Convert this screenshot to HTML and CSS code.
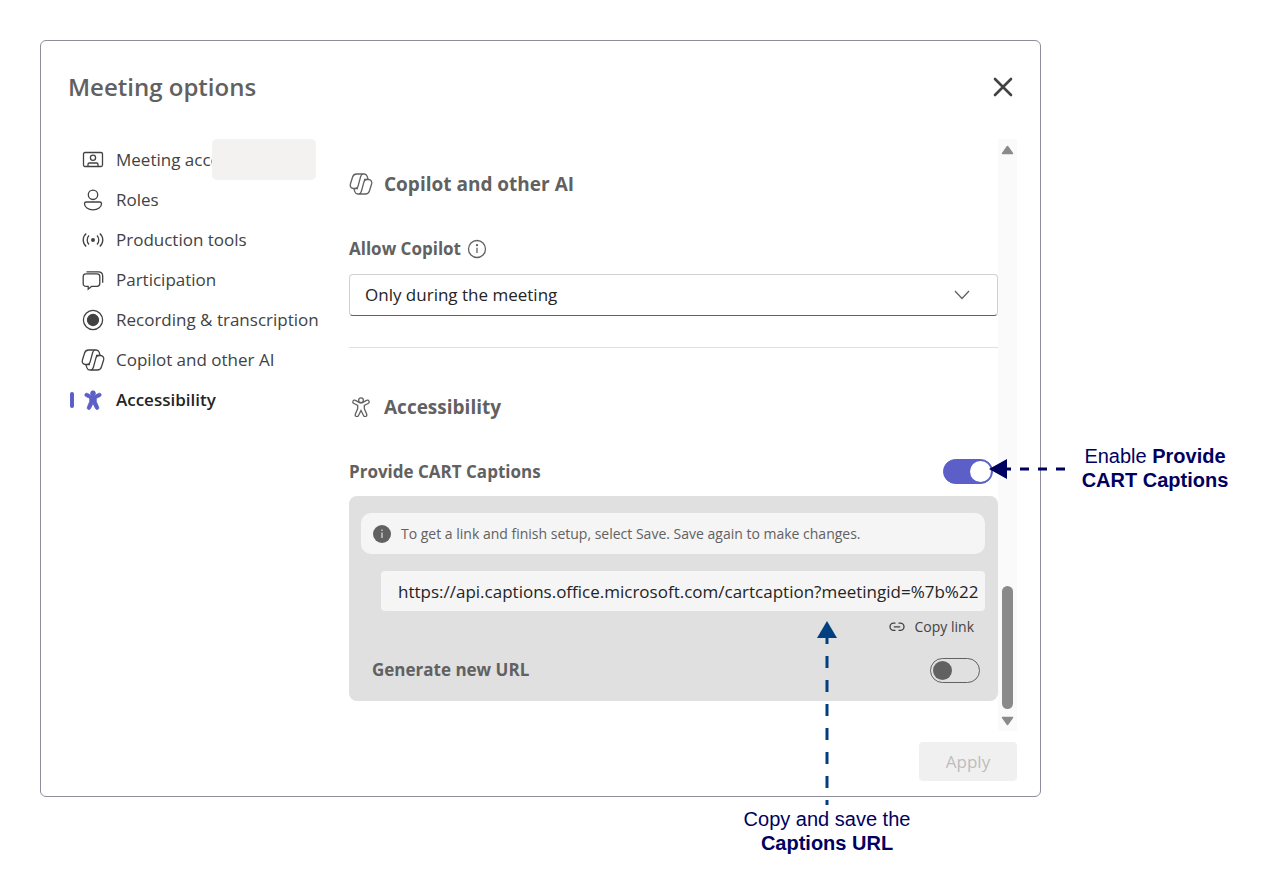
FILE: index.html
```html
<!DOCTYPE html>
<html lang="en">
<head>
    <meta charset="UTF-8">
    <meta name="viewport" content="width=device-width, initial-scale=1.0">
    <title>Meeting options</title>
    <link rel="stylesheet" href="styles.css">
</head>
<body>
    <!-- shared icon shapes -->
    <svg class="icon-defs" aria-hidden="true">
        <symbol id="icon-copilot" viewBox="0 0 24 22">
            <g id="copilot-half">
                <path d="M9 15.5H4.6C2 15.5.7 13.6 1.4 11L3.6 4C4.2 2 5.6 1 7.6 1h7.6c1.7 0 2.5.9 3 2.4l.9 3.1"/>
                <path d="M13.8 1c-1.3.4-1.8 1.4-2.2 2.8L9.2 12.7C8.7 14.5 8.1 15.5 6.4 15.5"/>
            </g>
            <use href="#copilot-half" transform="rotate(180 12 11)"/>
        </symbol>
        <symbol id="icon-person" viewBox="0 0 18 20">
            <circle cx="9" cy="3.2" r="2.4"/>
            <path d="M1 4.2c.4-1 1.5-1.3 2.5-.8L7 5.3c1.3.6 2.7.6 4 0l3.5-1.9c1-.5 2.1-.2 2.5.8.4.9 0 1.9-.9 2.3l-3.8 1.8v3.2l2.4 5.8c.3 1-.1 1.9-1 2.2-.9.3-1.8-.1-2.2-1L9 13.4l-2.500 5.100c-.4.9-1.3 1.3-2.2 1-.9-.3-1.3-1.2-1-2.2l2.400-5.800V8.300L1.900 6.500c-.9-.4-1.3-1.4-.9-2.3z"/>
        </symbol>
    </svg>

    <div class="page">
        <section class="dialog" aria-labelledby="dialog-title">
            <header class="dialog-header">
                <h1 id="dialog-title">Meeting options</h1>
                <button class="close-btn" type="button" aria-label="Close">
                    <svg width="20" height="20" viewBox="0 0 20 20"><path d="M2 2l16 16M18 2L2 18"/></svg>
                </button>
            </header>

            <div class="dialog-body">
                <nav class="side-nav">
                    <a href="#access" class="nav-item">
                        <svg class="icon" width="22" height="22" viewBox="0 0 22 22"><rect x="1.5" y="3.5" width="19" height="14" rx="1.5"/><circle cx="11" cy="8.7" r="2.6"/><path d="M6 17.5v-2.2c0-.8.5-1.3 1.3-1.3h7.4c.8 0 1.3.5 1.3 1.3v2.2"/></svg>
                        <span>Meeting access</span>
                        <span class="redaction"></span>
                    </a>
                    <a href="#roles" class="nav-item">
                        <svg class="icon" width="22" height="22" viewBox="0 0 22 22"><circle cx="11" cy="5.8" r="4.7"/><path d="M4.2 13h13.6c1 0 1.7.7 1.7 1.7 0 3.4-3.6 6.1-8.5 6.1s-8.5-2.7-8.5-6.1c0-1 .7-1.7 1.7-1.7z"/></svg>
                        <span>Roles</span>
                    </a>
                    <a href="#production" class="nav-item">
                        <svg class="icon" width="22" height="22" viewBox="0 0 22 22"><circle class="solid" cx="11" cy="11" r="1.3"/><path d="M4.2 4.5c-4 3.6-4 9.4 0 13M7 6.5c-2.400 2.500-2.400 6.500 0 9M17.8 4.5c4 3.6 4 9.4 0 13M15 6.5c2.400 2.500 2.400 6.500 0 9"/></svg>
                        <span>Production tools</span>
                    </a>
                    <a href="#participation" class="nav-item">
                        <svg class="icon" width="22" height="22" viewBox="0 0 22 22"><path d="M4 4.8h11c1.7 0 2.8 1.1 2.8 2.8v7c0 1.7-1.1 2.8-2.8 2.8H9.500l-3.300 2.800v-2.800H4c-1.7 0-2.8-1.1-2.8-2.8v-7c0-1.7 1.1-2.8 2.8-2.8z"/><path d="M4.5 2.8h11.8c2.6 0 4.4 1.8 4.4 4.4v6.6"/></svg>
                        <span>Participation</span>
                    </a>
                    <a href="#recording" class="nav-item">
                        <svg class="icon" width="22" height="22" viewBox="0 0 22 22"><circle cx="11" cy="11" r="9.6"/><circle class="solid" cx="11" cy="11" r="5.5"/></svg>
                        <span>Recording &amp; transcription</span>
                    </a>
                    <a href="#copilot" class="nav-item">
                        <svg class="icon icon-wide" width="24" height="22"><use href="#icon-copilot"/></svg>
                        <span>Copilot and other AI</span>
                    </a>
                    <a href="#accessibility" class="nav-item is-active" aria-current="true">
                        <svg class="icon" width="22" height="20"><use href="#icon-person"/></svg>
                        <span>Accessibility</span>
                    </a>
                </nav>

                <main class="settings">
                    <h2 id="copilot">
                        <svg class="icon" width="24" height="22"><use href="#icon-copilot"/></svg>
                        Copilot and other AI
                    </h2>
                    <div class="field-label">
                        <label for="allow-copilot">Allow Copilot</label>
                        <svg class="icon" width="20" height="20" viewBox="0 0 20 20"><circle cx="10" cy="10" r="8.5"/><path d="M10 8.8V14"/><circle class="solid" cx="10" cy="6.2" r=".5"/></svg>
                    </div>
                    <div class="select-wrap">
                        <select id="allow-copilot">
                            <option>Only during the meeting</option>
                            <option>During and after the meeting</option>
                        </select>
                        <svg class="chevron" width="16" height="10" viewBox="0 0 16 10"><path d="M1 1l7 7.5L15 1"/></svg>
                    </div>
                    <hr>

                    <h2 id="accessibility">
                        <svg class="icon" width="24" height="20"><use href="#icon-person"/></svg>
                        Accessibility
                    </h2>
                    <div class="setting-row">
                        <label for="cart">Provide CART Captions</label>
                        <div class="toggle-wrap">
                            <input class="toggle" type="checkbox" role="switch" id="cart" checked>
                            <svg class="arrow-left" width="78" height="20" viewBox="0 0 78 20"><path d="M0 10L18 0v20z"/><path class="dashes" d="M18 10h59" stroke-dasharray="9" stroke-dashoffset="5"/></svg>
                        </div>
                    </div>

                    <div class="cart-panel">
                        <p class="notice">
                            <svg width="18" height="18" viewBox="0 0 18 18"><circle cx="9" cy="9" r="9"/><path d="M9 7.5V13M9 4.5V6"/></svg>
                            To get a link and finish setup, select Save. Save again to make changes.
                        </p>
                        <div class="url-field">
                            <input type="text" aria-label="Captions URL" value="https://api.captions.office.microsoft.com/cartcaption?meetingid=%7b%22" readonly>
                            <svg class="arrow-up" width="20" height="184" viewBox="0 0 20 184"><path d="M10 0l10 17H0z"/><path class="dashes" d="M10 17v167" stroke-dasharray="12" stroke-dashoffset="6"/></svg>
                        </div>
                        <button class="copy-btn" type="button">
                            <svg width="16" height="10" viewBox="0 0 16 10"><path d="M6.5 1.2H4.6a3.6 3.6 0 0 0 0 7.2h1.9M9.5 1.2h1.9a3.6 3.6 0 0 1 0 7.2H9.5M4.8 4.8h6.4"/></svg>
                            Copy link
                        </button>
                        <div class="setting-row">
                            <label for="new-url">Generate new URL</label>
                            <input class="toggle" type="checkbox" role="switch" id="new-url">
                        </div>
                    </div>
                </main>

                <div class="scrollbar" aria-hidden="true">
                    <svg width="13" height="10" viewBox="0 0 13 10"><path d="M6.5 1.5l5 7h-10z"/></svg>
                    <div class="thumb"></div>
                    <svg width="13" height="10" viewBox="0 0 13 10"><path d="M6.5 8.500l-5-7h10z"/></svg>
                </div>
            </div>

            <footer class="dialog-footer">
                <button class="apply-btn" type="button" disabled>Apply</button>
            </footer>
        </section>

        <p class="callout callout-side">Enable <b>Provide<br>CART Captions</b></p>
        <p class="callout callout-bottom">Copy and save the<br><b>Captions URL</b></p>
    </div>
</body>
</html>
```

FILE: styles.css
```css
:root {
    --text: #424242;
    --text-muted: #616161;
    --text-strong: #242424;
    --accent: #5b5fc7;
    --navy: #000060;
    --blue: #023f80;
}

* { box-sizing: border-box; }

body {
    margin: 0;
    background: #fff;
    color: var(--text);
    font-family: 'Open Sans', 'Noto Sans', sans-serif;
    font-size: 17px;
    line-height: 24px;
}

h1, h2, p { margin: 0; }

button, input, select { font: inherit; color: inherit; }

svg { flex: none; fill: none; overflow: visible; }

.icon-defs { position: absolute; width: 0; height: 0; }
.icon { stroke: currentColor; stroke-width: 1.3; }
.icon .solid { fill: currentColor; }

.page {
    display: grid;
    grid-template-columns: minmax(0, 1fr) 228px;
    padding: 40px 16px 40px 40px;
}

/* --- Dialog --- */
.dialog {
    border: 1px solid #8e8e9c;
    border-radius: 6px;
    padding: 23px 23px 15px 27px;
}

.dialog-header {
    display: flex;
    justify-content: space-between;
    align-items: center;
    height: 46px;
    margin-bottom: 29px;
}
.dialog-header h1 { font-size: 24px; font-weight: 600; line-height: 32px; color: var(--text-muted); }

.close-btn { border: 0; background: none; padding: 0 4px; height: 20px; cursor: pointer; }
.close-btn svg { display: block; stroke: var(--text); stroke-width: 2.6; stroke-linecap: round; }

.dialog-body {
    display: grid;
    grid-template-columns: 248px minmax(0, 1fr) 19px;
}

/* --- Side nav --- */
.side-nav { display: flex; flex-direction: column; padding-top: 1px; }

.nav-item {
    display: flex;
    align-items: center;
    gap: 12px;
    height: 40px;
    padding-left: 14px;
    position: relative;
    color: var(--text);
    text-decoration: none;
    white-space: nowrap;
}
.icon-wide { margin: 0 -1px; }

.nav-item.is-active { color: var(--text-strong); font-weight: 600; }
.nav-item.is-active .icon { color: var(--accent); fill: var(--accent); stroke-width: 0.8; }
.nav-item.is-active::before {
    content: '';
    position: absolute;
    left: 2px;
    width: 4px;
    height: 16px;
    border-radius: 2px;
    background: var(--accent);
}

.redaction {
    position: absolute;
    right: 0;
    top: -1px;
    width: 104px;
    height: 41px;
    border-radius: 5px;
    background: #f3f2f1;
}

/* --- Settings --- */
.settings { padding: 29px 0 30px 33px; color: var(--text-muted); }

.settings h2 {
    display: flex;
    align-items: center;
    gap: 11px;
    font-size: 19px;
    font-weight: 700;
    line-height: 32px;
}
.settings label { font-weight: 700; }

.field-label { display: flex; align-items: center; gap: 6px; margin: 37px 0 13px; }

.select-wrap { position: relative; }
.select-wrap select {
    appearance: none;
    display: block;
    width: 100%;
    height: 42px;
    padding: 0 44px 0 15px;
    border: 1px solid #d1d1d1;
    border-bottom-color: #616161;
    border-radius: 4px;
    background: #fff;
    color: var(--text-strong);
}
.chevron { position: absolute; right: 28px; top: 16px; stroke: var(--text-muted); stroke-width: 1.3; pointer-events: none; }

.settings hr { margin: 31px 0 43px; border: 0; border-top: 1px solid #e0e0e0; }

.setting-row { display: flex; justify-content: space-between; align-items: center; }
.settings > .setting-row { align-items: flex-end; margin: 36px 5px 12px 0; }

/* --- Toggle --- */
.toggle {
    appearance: none;
    display: flex;
    align-items: center;
    width: 50px;
    height: 25px;
    margin: 0;
    padding: 2px;
    border: 1px solid #616161;
    border-radius: 13px;
    cursor: pointer;
}
.toggle::before {
    content: '';
    width: 19px;
    height: 19px;
    border-radius: 50%;
    background: #616161;
}
.toggle:checked { justify-content: flex-end; background: var(--accent); border-color: var(--accent); padding: 0 1px; }
.toggle:checked::before { width: 21px; height: 21px; background: #fff; }

.toggle-wrap { position: relative; }

/* --- CART panel --- */
.cart-panel {
    display: flex;
    flex-direction: column;
    padding: 17px 13px 18px 12px;
    border-radius: 8px;
    background: #e0e0e0;
}

.notice {
    display: flex;
    align-items: center;
    gap: 10px;
    min-height: 41px;
    padding: 0 12px;
    border-radius: 10px;
    background: #f5f5f5;
    font-size: 14px;
    line-height: 20px;
}
.notice circle { fill: #616161; }
.notice path { stroke: #e0e0e0; stroke-width: 1.2; }

.url-field { position: relative; margin: 17px 0 0 20px; }
.url-field input {
    display: block;
    width: 100%;
    height: 40px;
    padding: 0 2px 0 17px;
    border: 0;
    border-radius: 4px;
    background: #f5f5f5;
    color: var(--text-strong);
}

.copy-btn {
    display: flex;
    align-items: center;
    align-self: flex-end;
    gap: 10px;
    margin: 6px 11px 21px 0;
    padding: 0;
    border: 0;
    background: none;
    color: var(--text);
    font-size: 14px;
    line-height: 20px;
    cursor: pointer;
}
.copy-btn svg { stroke: var(--text); stroke-width: 1.3; }

.cart-panel .setting-row { align-items: flex-start; padding: 0 5px 0 11px; }

/* --- Scrollbar --- */
.scrollbar {
    display: flex;
    flex-direction: column;
    align-items: center;
    padding: 6px 0 5px;
    background: #fafafa;
}
.scrollbar svg { fill: #8a8a8a; stroke: #8a8a8a; stroke-width: 1.5; stroke-linejoin: round; }
.scrollbar .thumb { width: 11px; height: 123px; margin: auto 0 7px; border-radius: 6px; background: #8a8a8a; }

.dialog-footer { display: flex; justify-content: flex-end; padding-top: 11px; }
.apply-btn {
    width: 98px;
    height: 39px;
    border: 0;
    border-radius: 4px;
    background: #f0f0f0;
    color: #bdbdbd;
    font-size: 17px;
}

/* --- Callouts --- */
.callout {
    color: var(--navy);
    font-family: 'Liberation Sans', Arial, sans-serif;
    font-size: 20px;
    line-height: 24px;
    text-align: center;
}
.callout-side { padding-top: 404px; }
.callout-bottom { justify-self: end; width: 200px; margin: 10px 114px 0 0; }

/* arrows lie over the dialog and point at the control they belong to */
.arrow-left { position: absolute; left: 46px; top: 0; fill: var(--navy); }
.arrow-left .dashes { stroke: var(--navy); stroke-width: 3; }
.arrow-up { position: absolute; right: 148px; top: 50px; fill: var(--blue); }
.arrow-up .dashes { stroke: var(--blue); stroke-width: 3; }
```
